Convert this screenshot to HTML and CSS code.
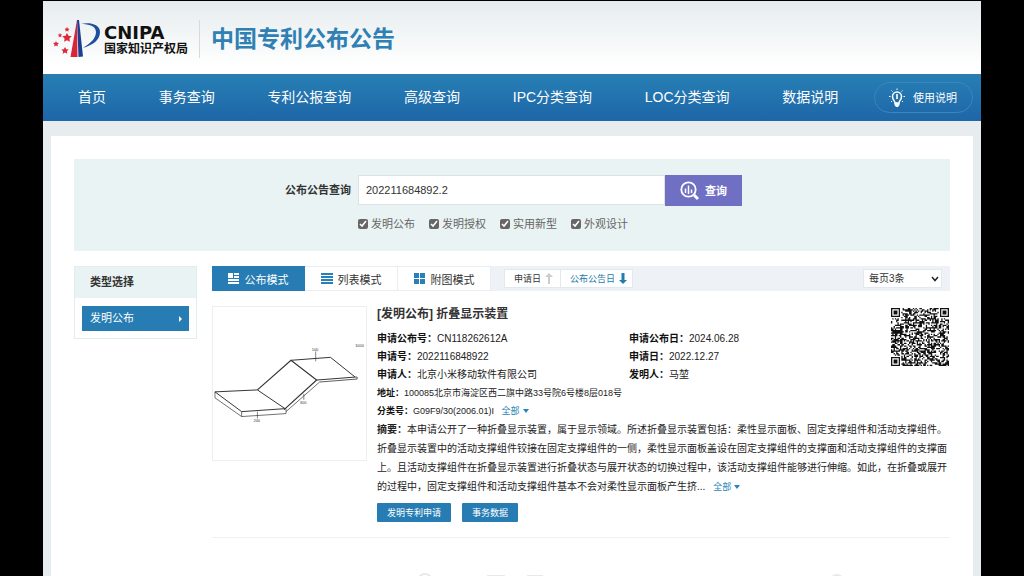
FILE: index.html
```html
<!DOCTYPE html>
<html lang="zh-CN">
<head>
    <meta charset="UTF-8">
    <meta name="viewport" content="width=device-width, initial-scale=1.0">
    <title>中国专利公布公告</title>
    <link rel="stylesheet" href="styles.css">
</head>
<body>
    <div class="page">
        <header class="header">
            <a href="#" class="logo">
                <svg class="logo-mark" width="48" height="38" viewBox="0 0 48 38" aria-hidden="true">
                    <path d="M24 0 L17.500 37 L24.500 37 Z" fill="#d9253a"/>
                    <path d="M24 0 L25.500 37 L30 36.500 L26 0 Z" fill="#1d3f92"/>
                    <path d="M28 4 C36 2 47 4 47 12 C47 20 40 25 30 28 C38 23 43 18 43 12 C43 6 36 4 28 4 Z" fill="#1d4f9c"/>
                    <g fill="#e0283c">
                        <path d="M14 13 l1.500 2.800 3.200 .4 -2.300 2.300 .5 3.200 -2.900 -1.500 -2.900 1.500 .5 -3.200 -2.300 -2.300 3.200 -.4 Z"/>
                        <path d="M12 27 l1.200 2.200 2.500 .3 -1.800 1.800 .4 2.500 -2.300 -1.200 -2.300 1.200 .4 -2.500 -1.800 -1.800 2.500 -.3 Z"/>
                        <path d="M3 21 l.9 1.800 2 .2 -1.400 1.400 .3 2 -1.800 -.9 -1.800 .9 .3 -2 -1.400 -1.400 2 -.2 Z"/>
                        <path d="M7 13 l.7 1.400 1.500 .2 -1.100 1.100 .3 1.500 -1.400 -.7 -1.400 .7 .3 -1.500 -1.100 -1.100 1.500 -.2 Z"/>
                        <path d="M14 7 l.8 1.500 1.700 .2 -1.200 1.200 .3 1.700 -1.600 -.8 -1.600 .8 .3 -1.700 -1.200 -1.200 1.700 -.2 Z"/>
                    </g>
                </svg>
                <span class="logo-text">
                    <span class="logo-en">CNIPA</span>
                    <span class="logo-cn">国家知识产权局</span>
                </span>
            </a>
            <h1>中国专利公布公告</h1>
        </header>

        <nav class="nav">
            <a href="#">首页</a>
            <a href="#">事务查询</a>
            <a href="#">专利公报查询</a>
            <a href="#">高级查询</a>
            <a href="#">IPC分类查询</a>
            <a href="#">LOC分类查询</a>
            <a href="#">数据说明</a>
            <a href="#" class="help">
                <svg width="18" height="20" viewBox="0 0 18 20" fill="none" stroke="#fff" aria-hidden="true">
                    <path d="M7 15 C7 12.500 4.500 12 4.500 8.500 A4.500 4.500 0 0 1 13.500 8.500 C13.500 12 11 12.500 11 15 Z" stroke-width="1.500"/>
                    <path d="M9 6 V11" stroke-width="1.600"/>
                    <path d="M6.500 15 H11.500 V17 L10 19 H8 L6.500 17 Z" fill="#fff" stroke="none"/>
                    <path d="M9 0.500 V2 M3.500 2.500 L4.500 3.500 M14.500 2.500 L13.500 3.500 M1 8.500 H2.500 M15.500 8.500 H17 M3 14 L4 13 M15 14 L14 13"/>
                </svg>
                使用说明
            </a>
        </nav>

        <main class="content">
            <form class="search">
                <label class="search-label" for="keyword">公布公告查询</label>
                <div class="search-fields">
                    <div class="search-row">
                        <input type="text" id="keyword" value="202211684892.2">
                        <button type="button" class="search-btn">
                            <svg width="20" height="20" viewBox="0 0 20 20" fill="none" stroke="#fff" aria-hidden="true">
                                <circle cx="8.500" cy="8.500" r="7.200" stroke-width="1.800"/>
                                <path d="M5.500 7.500 V12 M8.500 4.500 V13 M11.500 8.500 V12" stroke-width="1.500"/>
                                <path d="M14 14 L18 18" stroke-width="3"/>
                            </svg>
                            查询
                        </button>
                    </div>
                    <div class="checks">
                        <label><input type="checkbox" checked>发明公布</label>
                        <label><input type="checkbox" checked>发明授权</label>
                        <label><input type="checkbox" checked>实用新型</label>
                        <label><input type="checkbox" checked>外观设计</label>
                    </div>
                </div>
            </form>

            <div class="columns">
                <aside class="sidebar">
                    <h2>类型选择</h2>
                    <a href="#">发明公布</a>
                </aside>

                <section class="results">
                    <div class="toolbar">
                        <div class="tabs">
                            <button type="button" class="tab active">
                                <svg width="12" height="12" viewBox="0 0 12 12" fill="#fff" aria-hidden="true">
                                    <path d="M0 0 H5 V5 H0 Z M6 0 H11 V2 H6 Z M6 3 H11 V5 H6 Z M0 6 H11 V8 H0 Z M0 9 H11 V11 H0 Z"/>
                                </svg>
                                公布模式
                            </button>
                            <button type="button" class="tab">
                                <svg width="12" height="12" viewBox="0 0 12 12" fill="#2a7fb8" aria-hidden="true">
                                    <path d="M0 0 H12 V2 H0 Z M0 3 H12 V5 H0 Z M0 6 H12 V8 H0 Z M0 9 H12 V11 H0 Z"/>
                                </svg>
                                列表模式
                            </button>
                            <button type="button" class="tab">
                                <svg width="12" height="12" viewBox="0 0 12 12" fill="#2a7fb8" aria-hidden="true">
                                    <path d="M0 0 H5 V5 H0 Z M6 0 H11 V5 H6 Z M0 6 H5 V11 H0 Z M6 6 H11 V11 H6 Z"/>
                                </svg>
                                附图模式
                            </button>
                        </div>
                        <div class="sorts">
                            <button type="button">
                                申请日
                                <svg width="8" height="11" viewBox="0 0 8 11" fill="#ccc" aria-hidden="true"><path d="M4 0 L8 4 H5 V11 H3 V4 H0 Z"/></svg>
                            </button>
                            <button type="button" class="current">
                                公布公告日
                                <svg width="8" height="11" viewBox="0 0 8 11" fill="#237cab" aria-hidden="true"><path d="M4 11 L8 7 H5.500 V0 H2.500 V7 H0 Z"/></svg>
                            </button>
                        </div>
                        <div class="page-size">
                            <select aria-label="每页条数">
                                <option>每页3条</option>
                                <option>每页10条</option>
                            </select>
                            <svg width="8" height="6" viewBox="0 0 8 6" fill="none" stroke="#222" stroke-width="1.500" aria-hidden="true"><path d="M1 1 L4 4.500 L7 1"/></svg>
                        </div>
                    </div>

                    <article class="item">
                        <svg class="figure" viewBox="0 0 155 155" fill="none" stroke="#333" role="img" aria-label="摘要附图">
                            <path d="M2 86 L45 84 L73 103 L29 106 Z"/>
                            <path d="M2 86 V92 L29 111 L74 108 V103 M29 106 V111" stroke-width=".7"/>
                            <path d="M45 84 L79 54 L105 74 L72 104" stroke-width="1.200"/>
                            <path d="M74 106 L108 76" stroke-width=".7"/>
                            <path d="M79 54 L119 51 L144 71 L105 74"/>
                            <path d="M108 76 L146 73 V71 L144 71" stroke-width=".8"/>
                            <path d="M104 45 V55 M45 106 V113 M92 88 L92 94" stroke-width=".6"/>
                            <g class="figure-text">
                                <text x="100" y="45">100</text>
                                <text x="41" y="117">200</text>
                                <text x="88" y="98">300</text>
                                <text x="144" y="41">1000</text>
                            </g>
                        </svg>
                        <div class="info">
                            <div class="info-top">
                                <div class="info-main">
                                    <h3>[发明公布] 折叠显示装置</h3>
                                    <dl class="fields">
                                        <div><dt>申请公布号：</dt><dd>CN118262612A</dd></div>
                                        <div><dt>申请公布日：</dt><dd>2024.06.28</dd></div>
                                        <div><dt>申请号：</dt><dd>2022116848922</dd></div>
                                        <div><dt>申请日：</dt><dd>2022.12.27</dd></div>
                                        <div><dt>申请人：</dt><dd>北京小米移动软件有限公司</dd></div>
                                        <div><dt>发明人：</dt><dd>马堃</dd></div>
                                        <div class="wide"><dt>地址：</dt><dd>100085北京市海淀区西二旗中路33号院6号楼8层018号</dd></div>
                                        <div class="wide"><dt>分类号：</dt><dd>G09F9/30(2006.01)I <a href="#" class="more">全部</a></dd></div>
                                    </dl>
                                </div>
                                <svg class="qr" id="qr" viewBox="0 0 45 45" role="img" aria-label="二维码"></svg>
                            </div>
                            <p class="abstract"><b>摘要：</b>本申请公开了一种折叠显示装置，属于显示领域。所述折叠显示装置包括：柔性显示面板、固定支撑组件和活动支撑组件。折叠显示装置中的活动支撑组件铰接在固定支撑组件的一侧，柔性显示面板盖设在固定支撑组件的支撑面和活动支撑组件的支撑面上。且活动支撑组件在折叠显示装置进行折叠状态与展开状态的切换过程中，该活动支撑组件能够进行伸缩。如此，在折叠或展开的过程中，固定支撑组件和活动支撑组件基本不会对柔性显示面板产生挤... <a href="#" class="more">全部</a></p>
                            <div class="actions">
                                <button type="button">发明专利申请</button>
                                <button type="button">事务数据</button>
                            </div>
                        </div>
                    </article>
                </section>
            </div>
            <svg class="watermark" width="430" height="16" viewBox="0 0 430 16" fill="none" stroke="#e9e9e9" stroke-width="2" aria-hidden="true">
                <circle cx="8" cy="8" r="7"/>
                <path d="M48 3 V8 M70 3 H88 M110 3 H126 M142 3 V8"/>
                <circle cx="420" cy="9" r="7"/>
            </svg>
        </main>
    </div>
    <script src="qr.js"></script>
</body>
</html>
```
FILE: styles.css
```css
* {
    box-sizing: border-box;
}
body {
    margin: 0;
    padding: 1px 43px 0;
    background: #000;
    color: #333;
    font-family: "Liberation Sans", "Noto Sans CJK SC", sans-serif;
    font-size: 10px;
    height: 100vh;
    overflow: hidden;
}
h1, h2, h3, p, dl, dd {
    margin: 0;
}
a {
    text-decoration: none;
}
button, input, select {
    font-family: inherit;
    margin: 0;
}
button {
    cursor: pointer;
}
svg {
    flex: none;
}
.page {
    min-height: 100%;
    background: #e7edef;
    display: flex;
    flex-direction: column;
}

/* header */
.header {
    height: 73px;
    padding: 3px 11px 0 10px;
    display: flex;
    align-items: center;
    background: linear-gradient(#e6ecee, #fff 90%);
}
.logo {
    display: flex;
    align-items: center;
    gap: 3px;
    padding-right: 11px;
    border-right: 1px solid #d5dadc;
    color: #111;
}
.logo-text {
    display: flex;
    flex-direction: column;
    padding-top: 2px;
}
.logo-en {
    font: bold 18px/18px "DejaVu Sans", sans-serif;
}
.logo-cn {
    font-size: 12px;
    line-height: 15px;
    font-weight: bold;
}
.header h1 {
    margin-left: 11px;
    font-size: 23px;
    line-height: 32px;
    color: #2f80b3;
}

/* navigation */
.nav {
    height: 47px;
    padding: 0 8px 0 35px;
    display: flex;
    align-items: center;
    justify-content: space-between;
    background: linear-gradient(#277fb4, #1e66a8);
}
.nav a {
    color: #fff;
    font-size: 14px;
    line-height: 18px;
    padding-bottom: 2px;
    white-space: nowrap;
}
.nav .help {
    display: flex;
    align-items: center;
    gap: 7px;
    height: 31px;
    padding: 0 15px 0 13px;
    margin-left: -17px;
    border: 1px solid #3a86bd;
    border-radius: 16px;
    font-size: 11px;
}

.content {
    flex: 1;
    display: flex;
    flex-direction: column;
    margin: 15px 8px 0;
    padding: 23px 23px 0;
    background: #fff;
}

/* search box */
.search {
    display: flex;
    justify-content: center;
    gap: 7px;
    padding: 16px 0 19px 3px;
    background: #e9f3f3;
}
.search-label {
    font-size: 11px;
    line-height: 30px;
    font-weight: bold;
}
.search-row {
    display: flex;
    width: 384px;
}
.search-row input {
    flex: 1;
    min-width: 0;
    height: 30px;
    padding: 0 7px;
    border: 1px solid #dde3e4;
    font-size: 11px;
    color: #333;
}
.search-btn {
    display: flex;
    align-items: center;
    justify-content: center;
    gap: 5px;
    width: 77px;
    height: 31px;
    border: 0;
    background: #6f6fc4;
    color: #fff;
    font-size: 11px;
    line-height: 14px;
    font-weight: bold;
}
.checks {
    display: flex;
    gap: 14px;
    padding-top: 10px;
}
.checks label {
    display: flex;
    align-items: center;
    gap: 3px;
    font-size: 11px;
    line-height: 16px;
    color: #666;
}
.checks input {
    width: 10px;
    height: 10px;
    accent-color: #666;
}

.columns {
    display: flex;
    align-items: flex-start;
    gap: 15px;
    padding-top: 15px;
}

/* type list */
.sidebar {
    width: 123px;
    border: 1px solid #e3edef;
    flex: none;
}
.sidebar h2 {
    padding: 0 15px;
    font-size: 11px;
    line-height: 31px;
    background: #e9f3f3;
}
.sidebar a {
    display: flex;
    align-items: center;
    justify-content: space-between;
    margin: 8px 7px 7px;
    padding: 0 7px 0 8px;
    background: #277db3;
    color: #fff;
    font-size: 11px;
    line-height: 25px;
}
.sidebar a::after {
    content: "";
    border: 3px solid transparent;
    border-left-color: #fff;
    border-right: 0;
}

.results {
    flex: 1;
    min-width: 0;
}
.toolbar {
    display: flex;
    align-items: center;
    height: 25px;
    padding-right: 8px;
    background: #eef2f7;
}
.tabs {
    display: flex;
    align-self: stretch;
}
.tab {
    display: flex;
    align-items: center;
    justify-content: center;
    gap: 5px;
    width: 93px;
    padding: 0;
    border: 1px solid #e8edf1;
    border-left: 0;
    background: #fff;
    color: #333;
    font-size: 11px;
}
.tab.active {
    background: #277db3;
    border-color: #277db3;
    color: #fff;
}
.sorts {
    display: flex;
    margin-left: 13px;
}
.sorts button {
    display: flex;
    align-items: center;
    gap: 4px;
    height: 19px;
    padding: 0 7px 0 9px;
    border: 1px solid #e3e8ec;
    background: #fff;
    color: #333;
    font-size: 9px;
}
.sorts button + button {
    border-left: 0;
}
.sorts .current {
    padding-right: 5px;
    color: #237cab;
}
.page-size {
    display: grid;
    align-items: center;
    width: 79px;
    margin-left: auto;
}
.page-size select, .page-size svg {
    grid-area: 1 / 1;
}
.page-size select {
    height: 19px;
    padding: 0 5px;
    border: 1px solid #e3e8ec;
    background: #fff;
    color: #333;
    font-size: 10px;
    appearance: none;
}
.page-size svg {
    justify-self: end;
    margin-right: 3px;
    pointer-events: none;
}

/* result item */
.item {
    display: flex;
    align-items: flex-start;
    gap: 10px;
    padding: 15px 0;
    border-bottom: 1px solid #e9f3f6;
}
.figure {
    width: 155px;
    height: 155px;
    border: 1px solid #eee;
}
.figure-text {
    font-size: 4px;
    fill: #333;
    stroke: none;
}
.info {
    flex: 1;
    min-width: 0;
}
.info-top {
    display: flex;
    align-items: flex-start;
}
.info-main {
    flex: 1;
}
.info h3 {
    font-size: 12px;
    line-height: 17px;
    margin-bottom: 7px;
}
.fields {
    display: grid;
    grid-template-columns: 252px 1fr;
    line-height: 18px;
    color: #222;
}
.fields div {
    display: flex;
}
.fields dt {
    font-weight: bold;
    color: #111;
}
.fields .wide {
    grid-column: 1 / -1;
    font-size: 9px;
}
.more {
    margin-left: 5px;
    color: #2a84b8;
    font-size: 9px;
}
.more::after {
    content: "";
    display: inline-block;
    margin-left: 3px;
    vertical-align: 1px;
    border: 3px solid transparent;
    border-top: 4px solid #2a84b8;
    border-bottom: 0;
}
.qr {
    width: 58px;
    height: 58px;
    margin: 2px 1px 0 0;
}
.abstract {
    line-height: 19px;
    color: #222;
}
.actions {
    display: flex;
    gap: 11px;
    margin-top: 6px;
}
.actions button {
    height: 19px;
    padding: 0 10px;
    border: 0;
    border-radius: 1px;
    background: #277db3;
    color: #fff;
    font-size: 9px;
}

.watermark {
    align-self: center;
    margin: 35px 0 -20px 240px;
}
```
FILE: qr.js
```js
// draws the code as one path: three finder squares and the data modules
const size = 45;
let seed = 7;
let d = '';

function inCorner(x, y) {
    return (x < 8 && y < 8) || (x > size - 9 && y < 8) || (x < 8 && y > size - 9);
}

for (let y = 0; y < size; y++) {
    for (let x = 0; x < size; x++) {
        seed = (seed * 16807) % 2147483647;
        if (!inCorner(x, y) && seed / 2147483647 < 0.55) {
            d += `M${x} ${y}h1v1h-1z`;
        }
    }
}

[[0, 0], [size - 7, 0], [0, size - 7]].forEach(([x, y]) => {
    d += `M${x} ${y}h7v7h-7zM${x + 1} ${y + 1}v5h5v-5zM${x + 2} ${y + 2}h3v3h-3z`;
});

document.getElementById('qr').innerHTML = `<path d="${d}" fill="#111"/>`;
```
